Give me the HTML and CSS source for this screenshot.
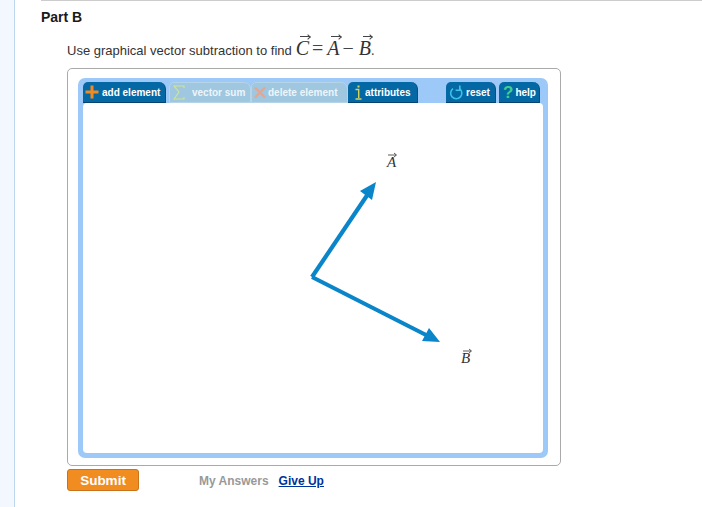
FILE: index.html
```html
<!DOCTYPE html>
<html lang="en">
<head>
<meta charset="utf-8">
<title>Part B</title>
<link rel="stylesheet" href="styles.css">
</head>
<body>
<div class="page">
  <aside class="rail"></aside>
  <main class="main">
    <h2 class="part-title">Part B</h2>
    <section class="part-body">
      <p class="prompt">Use graphical vector subtraction to find
        <span class="math">
          <span class="vec">C</span><span class="op">=</span><span class="vec">A</span><span class="op op-minus">−</span><span class="vec">B</span><span class="dot">.</span>
        </span>
      </p>
      <div class="tool-box">
        <div class="frame">
          <div class="toolbar">
            <div class="tool-group">
              <button class="tool tool-add">
                <svg class="ico" viewBox="0 0 14 14"><path d="M5.500 0.500h3v5h5v3h-5v5h-3v-5h-5v-3h5z" fill="#f18a1f"/></svg>add element
              </button>
              <button class="tool tool-sum off">
                <svg class="ico-sum" viewBox="0 0 12 15"><path d="M11 3V1H1l5 6-5 7h10v-2" fill="none" stroke="#cfe58f" stroke-width="1.100"/></svg>vector sum
              </button>
              <button class="tool tool-del off">
                <svg class="ico-x" viewBox="0 0 12 12"><path d="M1 1l10 10M11 1L1 11" stroke="#e9a58c" stroke-width="2.200" fill="none"/></svg>delete element
              </button>
              <button class="tool tool-attr">
                <svg class="ico-i" viewBox="0 0 8 15"><path d="M4.500 0.500v2" stroke="#d4d45c" stroke-width="2" fill="none"/><path d="M1.500 4.500H4.700V13M1.500 14H7.500" stroke="#d4d45c" stroke-width="1.400" fill="none"/></svg>attributes
              </button>
            </div>
            <div class="tool-group tool-group-right">
              <button class="tool tool-reset">
                <svg class="ico-reset" viewBox="0 0 14 15"><path d="M4 3.600A5.600 5.600 0 1 0 10.500 3.600" fill="none" stroke="#39c3e6" stroke-width="1.600"/><path d="M10.800 0.500V5.200H6.600" fill="none" stroke="#39c3e6" stroke-width="1.600"/></svg>reset
              </button>
              <button class="tool tool-help"><span class="q">?</span>help</button>
            </div>
          </div>
          <div class="canvas">
            <svg class="plot" viewBox="0 0 460 350" aria-label="Vectors A and B">
              <path d="M229 174L288 86.500" stroke="#0a85c9" stroke-width="4.200" fill="none"/>
              <path d="M229 174L346 233.500" stroke="#0a85c9" stroke-width="4.200" fill="none"/>
              <path d="M293 79L289 97L277 88z" fill="#0a85c9"/>
              <path d="M357 239L339 238L346 225z" fill="#0a85c9"/>
              <text class="lbl" x="304" y="64">A</text>
              <path class="lbl-arrow" d="M305 52h8M311 50l2.500 2-2.500 2"/>
              <text class="lbl" x="378" y="260">B</text>
              <path class="lbl-arrow" d="M380 248h8M386 246l2.500 2-2.500 2"/>
            </svg>
          </div>
        </div>
      </div>
      <div class="actions">
        <button class="submit">Submit</button>
        <span class="my-answers">My Answers</span>
        <a class="give-up" href="#">Give Up</a>
      </div>
    </section>
  </main>
</div>
</body>
</html>
```
FILE: styles.css
```css
* { box-sizing: border-box; }
html, body { margin: 0; padding: 0; background: #fff; }
body { font-family: "Liberation Sans", Arial, sans-serif; color: #333; overflow: hidden; }
.page { display: flex; width: 702px; height: 507px; }
.rail { width: 15px; flex: none; background: #f2f8fe; border-right: 1px solid #bcd6ee; }
.main { flex: 1; margin-left: 26px; border-top: 1px solid #ccc; min-width: 0; }
.part-title { margin: 9px 0 0; font-size: 14px; line-height: 15px; font-weight: bold; color: #1a1a1a; }
.part-body { margin-left: 26px; }
.prompt { margin: 10px 0 0; height: 33px; font-size: 13px; line-height: 26px; color: #333; white-space: nowrap; display: flex; align-items: baseline; gap: 4px; }
.math { font-family: "Liberation Serif", "DejaVu Serif", serif; font-size: 20px; color: #444; display: inline-flex; align-items: baseline; }
.vec { font-style: italic; position: relative; color: #333; }
.vec::after { content: ""; position: absolute; left: 4px; right: -1px; top: 1px; height: 1px; background: #444; }
.vec::before { content: ""; position: absolute; right: -1px; top: 0; width: 3px; height: 3px; border-top: 1px solid #444; border-right: 1px solid #444; transform: rotate(45deg); }
.op { margin: 0 4px 0 3px; }
.op-minus { margin: 0 5px 0 3px; }
.dot { font-size: 14px; }
.tool-box { width: 494px; height: 398px; border: 1px solid #aaa; border-radius: 5px; padding: 9px 12px 7px 10px; }
.frame { height: 100%; background: #9cc9f8; border-radius: 7px; padding: 4px 5px 5px 5px; display: flex; flex-direction: column; }
.toolbar { display: flex; justify-content: space-between; height: 21px; flex: none; padding-right: 3px; }
.tool-group { display: flex; }
.tool-group-right { gap: 3px; }
.tool { height: 21px; border: 0; border-bottom: 1px solid #06446f; border-right: 1px solid #06507f; border-radius: 5px 7px 0 0; background: #0468a4; color: #fff; font: bold 10px "Liberation Sans", Arial, sans-serif; display: flex; align-items: center; padding: 0; white-space: nowrap; }
.tool.off { background: #9fc7e0; color: #edf5fa; border-color: #b6d4e8; border-top: 1px solid #b6d4e8; border-left: 1px solid #b6d4e8; }
.tool-add { width: 83px; margin-right: 3px; padding-left: 2px; }
.tool-sum { width: 82px; padding-left: 3px; }
.tool-del { width: 97px; padding-left: 2px; }
.tool-attr { width: 70px; padding-left: 6px; }
.tool-reset { width: 50px; padding-left: 3px; }
.tool-help { width: 41px; padding-left: 4px; }
.ico { width: 14px; height: 14px; margin-right: 3px; }
.ico-sum { width: 12px; height: 15px; margin-right: 7px; }
.ico-x { width: 12px; height: 13px; margin-right: 2px; }
.ico-i { width: 8px; height: 15px; margin-right: 3px; }
.ico-reset { width: 14px; height: 15px; margin-right: 3px; }
.q { color: #3fd08f; font-size: 17px; line-height: 15px; margin-right: 2px; }
.canvas { flex: 1; background: #fff; border-radius: 4px; min-height: 0; }
.plot { display: block; width: 460px; height: 350px; }
.lbl { font: italic 15px "Liberation Serif", serif; fill: #333; }
.lbl-arrow { stroke: #333; stroke-width: 0.8; fill: none; }
.actions { display: flex; align-items: center; margin-top: 3px; height: 22px; }
.submit { width: 72px; height: 22px; background: #f08c20; border: 1px solid #c9741c; border-radius: 3px; color: #fff; font: bold 13.500px "Liberation Sans", Arial, sans-serif; padding: 0; }
.my-answers { margin-left: 60px; font-size: 12px; font-weight: bold; color: #999; position: relative; top: 1px; }
.give-up { margin-left: 10px; font-size: 12px; font-weight: bold; color: #00329b; text-decoration: underline; position: relative; top: 1px; }
```
